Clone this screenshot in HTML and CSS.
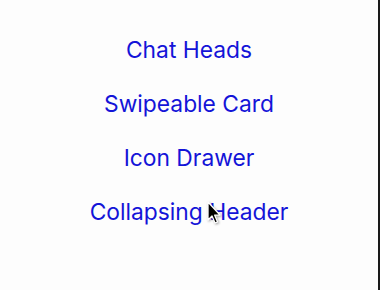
FILE: index.html
```html
<!DOCTYPE html>
<html>
<head>
<meta charset="utf-8">
<link rel="stylesheet" href="styles.css">
</head>
<body>
<div class="screen">
  <ul class="menu">
    <li class="item">Chat Heads</li>
    <li class="item">Swipeable Card</li>
    <li class="item">Icon Drawer</li>
    <li class="item">Collapsing Header</li>
  </ul>
  <svg class="cursor" width="16" height="26" viewBox="0 0 16 26">
    <path d="M2 2 L2 20 L6 16 L9 23 L11.6 21.9 L8.7 15.2 L14 15 Z" fill="#000" stroke="#fff" stroke-width="1.3" stroke-linejoin="round"/>
  </svg>
</div>
</body>
</html>
```
FILE: styles.css
```css
html, body {
  margin: 0;
  padding: 0;
  background: #fdfdfd;
}
.screen {
  position: relative;
  width: 378px;
  height: 290px;
  border-right: 2px solid #1a1a1a;
  background: #fdfdfd;
}
.menu {
  list-style: none;
  margin: 0;
  padding: 23px 0 0 0;
  display: flex;
  flex-direction: column;
  align-items: center;
}
.item {
  font-family: Inter, "Liberation Sans", sans-serif;
  font-size: 22.8px;
  line-height: 54px;
  color: #1414d8;
}
.cursor {
  position: absolute;
  left: 206px;
  top: 200px;
  filter: drop-shadow(1px 1px 1px rgba(0,0,0,0.35));
}
```
